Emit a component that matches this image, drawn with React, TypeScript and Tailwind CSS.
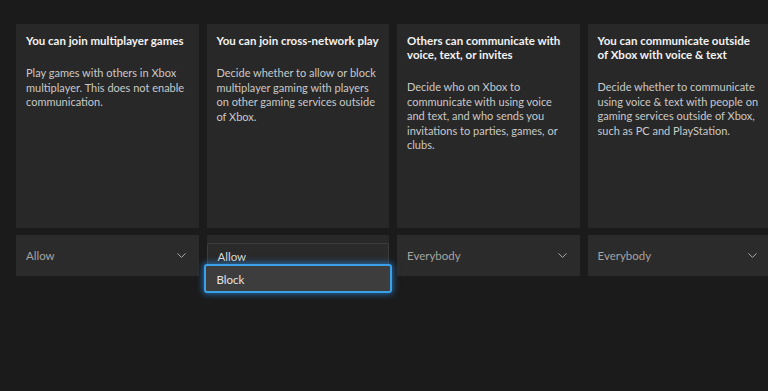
import { ChevronDown } from "lucide-react";

const CARDS = [
  {
    title: "You can join multiplayer games",
    body: "Play games with others in Xbox multiplayer. This does not enable communication.",
    value: "Allow",
  },
  {
    title: "You can join cross-network play",
    body: "Decide whether to allow or block multiplayer gaming with players on other gaming services outside of Xbox.",
    value: "Allow",
    open: true,
  },
  {
    title: "Others can communicate with voice, text, or invites",
    body: "Decide who on Xbox to communicate with using voice and text, and who sends you invitations to parties, games, or clubs.",
    value: "Everybody",
  },
  {
    title: "You can communicate outside of Xbox with voice & text",
    body: "Decide whether to communicate using voice & text with people on gaming services outside of Xbox, such as PC and PlayStation.",
    value: "Everybody",
  },
];

const Dropdown = ({ value, open }: { value: string; open?: boolean }) => {
  if (open) {
    return (
      <div className="relative h-[41px] bg-[#282828]">
        <div className="absolute left-0 right-0 top-[8px] h-[22px] rounded-t-[2px] border border-b-0 border-[#3c3c3c] bg-[#2a2a2a] px-[10px] pt-[4px] text-[11.5px] text-[#dcdcdc]">
          {value}
        </div>
        <div className="absolute -left-[3px] -right-[3px] top-[29px] h-[29px] rounded-[3px] border-2 border-[#3aa0e8] bg-[#3d3d3d] px-[11px] pt-[5px] text-[11.5px] text-[#e4e4e4] shadow-[0_0_6px_1px_rgba(40,140,230,0.7)]">
          Block
        </div>
      </div>
    );
  }
  return (
    <div className="flex h-[41px] items-center justify-between bg-[#2b2b2b] pl-[10px] pr-[10px] text-[11.5px] text-[#a3a3a3]">
      <span>{value}</span>
      <ChevronDown size={15} strokeWidth={1.4} className="text-[#bdbdbd]" />
    </div>
  );
};

export default function App() {
  return (
    <div
      className="h-[391px] w-[768px] overflow-hidden bg-[#1b1b1b] pl-[16px] pt-[24px]"
      style={{ fontFamily: 'Lato, "Noto Sans", sans-serif' }}
    >
      <div className="flex gap-[8px]">
        {CARDS.map((card) => (
          <div key={card.title} className="flex w-[182.5px] shrink-0 flex-col gap-[7px]">
            <div className="h-[204px] bg-[#282828] pl-[10px] pr-[10px] pt-[10px]">
              <h3 className="-mr-[2px] text-[11.5px] font-bold leading-[14px] text-[#f2f2f2]">{card.title}</h3>
              <p className="mt-[18px] text-[11px] leading-[14.5px] text-[#c8c8c8]">{card.body}</p>
            </div>
            <Dropdown value={card.value} open={card.open} />
          </div>
        ))}
      </div>
    </div>
  );
}
